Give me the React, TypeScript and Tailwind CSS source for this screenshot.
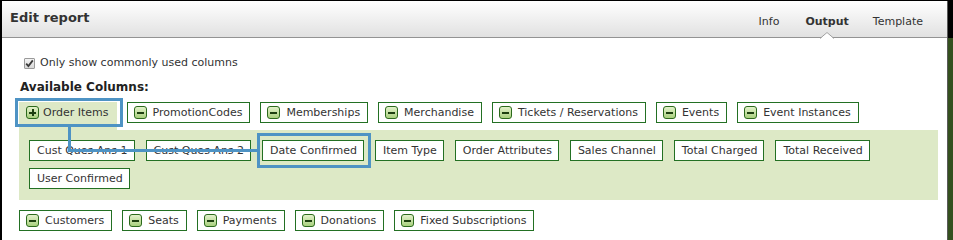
import React from "react";

const font = { fontFamily: '"DejaVu Sans", Verdana, sans-serif' };

function Icon({ plus }: { plus?: boolean }) {
  return (
    <span className="relative inline-flex w-[13px] h-[13px] rounded-[3px] border border-[#2c6a1c] bg-gradient-to-b from-[#e3f1cb] to-[#a9d07e] items-center justify-center shrink-0">
      <span className="absolute w-[7px] h-[2px] bg-[#1d3f10]" />
      {plus && <span className="absolute w-[2px] h-[7px] bg-[#1d3f10]" />}
    </span>
  );
}

function Btn({ label, icon = true }: { label: string; icon?: boolean }) {
  return (
    <div
      className={
        icon
          ? "flex items-center h-[21px] border border-[#237023] bg-white pl-[6px] pr-[7px] gap-[6px] text-[11px] leading-[19px] text-[#333] whitespace-nowrap"
          : "flex items-center h-[21px] border border-[#237023] bg-white pl-[7px] pr-[6px] text-[11px] leading-[19px] text-[#333] whitespace-nowrap"
      }
    >
      {icon && <Icon />}
      <span>{label}</span>
    </div>
  );
}

export default function App() {
  const row1 = ["PromotionCodes", "Memberships", "Merchandise", "Tickets / Reservations", "Events", "Event Instances"];
  const inner = ["Cust Ques Ans 1", "Cust Ques Ans 2", "Date Confirmed", "Item Type", "Order Attributes", "Sales Channel", "Total Charged", "Total Received", "User Confirmed"];
  const row3 = ["Customers", "Seats", "Payments", "Donations", "Fixed Subscriptions"];
  return (
    <div className="relative w-[953px] h-[240px] bg-black flex pt-[1px] pl-[2px] overflow-hidden" style={font}>
      <div className="w-[946px] h-[239px] bg-white border-r border-[#5a5a5a] flex flex-col">
        <div className="h-[37px] shrink-0 border-b border-[#939393] bg-gradient-to-b from-white to-[#e1e1e1] flex justify-between">
          <div className="pl-[8px] pt-[9px] text-[13px] leading-[16px] font-bold text-[#333]">Edit report</div>
          <div className="flex pr-[12px] pt-[14px] text-[11px] leading-[14px] text-[#333]">
            <div className="px-[12px] -ml-[2px] mr-[2px]">Info</div>
            <div className="relative px-[12px] font-bold">
              Output
              <svg className="absolute left-1/2 -translate-x-1/2 top-[17px]" width="14" height="7" viewBox="0 0 14 7">
                <polygon points="0,7 7,0 14,7" fill="#ffffff" />
                <polyline points="0,6.5 7,0.5 14,6.5" fill="none" stroke="#a0a0a0" strokeWidth="1" />
              </svg>
            </div>
            <div className="px-[12px]">Template</div>
          </div>
        </div>
        <div className="flex flex-col pl-[17px] pr-[9px]">
          <div className="flex items-center mt-[18px] ml-[5px] h-[14px] gap-[5px] text-[11px] text-[#333]">
            <span className="w-[11px] h-[11px] border border-[#9a9a9a] bg-gradient-to-b from-[#f4f4f4] to-[#d8d8d8] flex items-center justify-center rounded-[1px]">
              <svg width="9" height="9" viewBox="0 0 9 9">
                <path d="M1.2 4.6 L3.4 7 L7.8 1.4" fill="none" stroke="#3a3a3a" strokeWidth="1.8" />
              </svg>
            </span>
            <span className="leading-[14px]">Only show commonly used columns</span>
          </div>
          <div className="mt-[10px] h-[15px] text-[12px] leading-[15px] font-bold text-[#222] ml-[1px]">Available Columns:</div>
          <div className="mt-[7px] flex items-start gap-[10px]">
            <div className="flex items-start h-[28px] bg-[#dde9c6] pl-[7px] pr-[8px] pt-[4px] gap-[4px] text-[11px] leading-[14px] text-[#333] whitespace-nowrap">
              <span className="mt-[0px]"><Icon plus /></span>
              <span>Order Items</span>
            </div>
            {row1.map((l) => (
              <Btn key={l} label={l} />
            ))}
          </div>
          <div className="bg-[#dde9c6] pt-[10px] pb-[11px] px-[10px] flex flex-wrap gap-x-[11px] gap-y-[7px]">
            {inner.map((l) => (
              <Btn key={l} label={l} icon={false} />
            ))}
          </div>
          <div className="mt-[10px] flex gap-[10px]">
            {row3.map((l) => (
              <Btn key={l} label={l} />
            ))}
          </div>
        </div>
      </div>
      <div className="flex flex-col w-[5px]">
        <div className="h-[37px] bg-black" />
        <div className="flex-1 bg-[#34501f]" />
      </div>
      <div className="absolute left-[15px] top-[98px] w-[108px] h-[29px] border-[3px] border-[#4e93c4]" />
      <div className="absolute left-[257px] top-[133px] w-[114px] h-[35px] border-[3px] border-[#4e93c4]" />
      <div className="absolute left-[68px] top-[127px] w-[3px] h-[25px] bg-[#4e93c4]" />
      <div className="absolute left-[68px] top-[149px] w-[189px] h-[3px] bg-[#4e93c4]" />
    </div>
  );
}
